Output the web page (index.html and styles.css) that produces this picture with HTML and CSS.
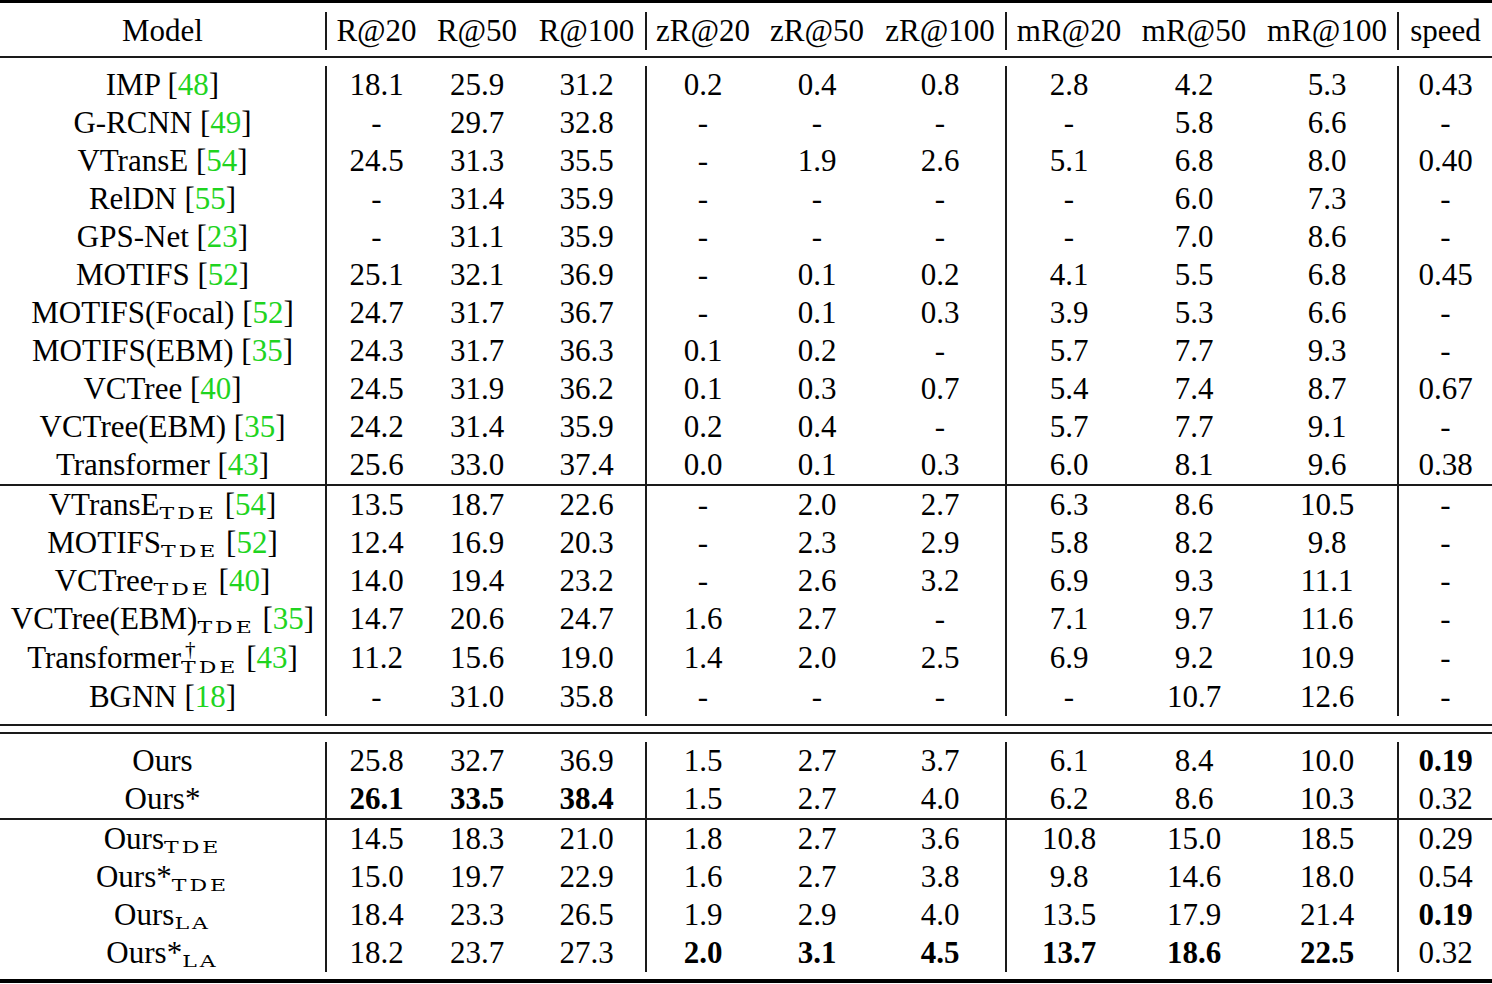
FILE: index.html
```html
<!doctype html>
<html lang="en">
  <head>
    <meta charset="UTF-8" />
    <meta name="viewport" content="width=device-width, initial-scale=1.0" />
    <title>Scene Graph Results</title>
    <link rel="stylesheet" href="styles.css">
  </head>
  <body>
    <div class="results">
      <div class="rule thick"></div>

      <div class="section head">
        <div class="row">
          <div class="c">Model</div>
          <div class="c vl">R@20</div><div class="c">R@50</div><div class="c">R@100</div>
          <div class="c vl">zR@20</div><div class="c">zR@50</div><div class="c">zR@100</div>
          <div class="c vl">mR@20</div><div class="c">mR@50</div><div class="c">mR@100</div>
          <div class="c vl">speed</div>
        </div>
      </div>

      <div class="rule"></div>

      <div class="section first">
        <div class="row">
          <div class="c">IMP [<span class="cite">48</span>]</div>
          <div class="c vl">18.1</div><div class="c">25.9</div><div class="c">31.2</div>
          <div class="c vl">0.2</div><div class="c">0.4</div><div class="c">0.8</div>
          <div class="c vl">2.8</div><div class="c">4.2</div><div class="c">5.3</div>
          <div class="c vl">0.43</div>
        </div>
        <div class="row">
          <div class="c">G-RCNN [<span class="cite">49</span>]</div>
          <div class="c vl">-</div><div class="c">29.7</div><div class="c">32.8</div>
          <div class="c vl">-</div><div class="c">-</div><div class="c">-</div>
          <div class="c vl">-</div><div class="c">5.8</div><div class="c">6.6</div>
          <div class="c vl">-</div>
        </div>
        <div class="row">
          <div class="c">VTransE [<span class="cite">54</span>]</div>
          <div class="c vl">24.5</div><div class="c">31.3</div><div class="c">35.5</div>
          <div class="c vl">-</div><div class="c">1.9</div><div class="c">2.6</div>
          <div class="c vl">5.1</div><div class="c">6.8</div><div class="c">8.0</div>
          <div class="c vl">0.40</div>
        </div>
        <div class="row">
          <div class="c">RelDN [<span class="cite">55</span>]</div>
          <div class="c vl">-</div><div class="c">31.4</div><div class="c">35.9</div>
          <div class="c vl">-</div><div class="c">-</div><div class="c">-</div>
          <div class="c vl">-</div><div class="c">6.0</div><div class="c">7.3</div>
          <div class="c vl">-</div>
        </div>
        <div class="row">
          <div class="c">GPS-Net [<span class="cite">23</span>]</div>
          <div class="c vl">-</div><div class="c">31.1</div><div class="c">35.9</div>
          <div class="c vl">-</div><div class="c">-</div><div class="c">-</div>
          <div class="c vl">-</div><div class="c">7.0</div><div class="c">8.6</div>
          <div class="c vl">-</div>
        </div>
        <div class="row">
          <div class="c">MOTIFS [<span class="cite">52</span>]</div>
          <div class="c vl">25.1</div><div class="c">32.1</div><div class="c">36.9</div>
          <div class="c vl">-</div><div class="c">0.1</div><div class="c">0.2</div>
          <div class="c vl">4.1</div><div class="c">5.5</div><div class="c">6.8</div>
          <div class="c vl">0.45</div>
        </div>
        <div class="row">
          <div class="c">MOTIFS(Focal) [<span class="cite">52</span>]</div>
          <div class="c vl">24.7</div><div class="c">31.7</div><div class="c">36.7</div>
          <div class="c vl">-</div><div class="c">0.1</div><div class="c">0.3</div>
          <div class="c vl">3.9</div><div class="c">5.3</div><div class="c">6.6</div>
          <div class="c vl">-</div>
        </div>
        <div class="row">
          <div class="c">MOTIFS(EBM) [<span class="cite">35</span>]</div>
          <div class="c vl">24.3</div><div class="c">31.7</div><div class="c">36.3</div>
          <div class="c vl">0.1</div><div class="c">0.2</div><div class="c">-</div>
          <div class="c vl">5.7</div><div class="c">7.7</div><div class="c">9.3</div>
          <div class="c vl">-</div>
        </div>
        <div class="row">
          <div class="c">VCTree [<span class="cite">40</span>]</div>
          <div class="c vl">24.5</div><div class="c">31.9</div><div class="c">36.2</div>
          <div class="c vl">0.1</div><div class="c">0.3</div><div class="c">0.7</div>
          <div class="c vl">5.4</div><div class="c">7.4</div><div class="c">8.7</div>
          <div class="c vl">0.67</div>
        </div>
        <div class="row">
          <div class="c">VCTree(EBM) [<span class="cite">35</span>]</div>
          <div class="c vl">24.2</div><div class="c">31.4</div><div class="c">35.9</div>
          <div class="c vl">0.2</div><div class="c">0.4</div><div class="c">-</div>
          <div class="c vl">5.7</div><div class="c">7.7</div><div class="c">9.1</div>
          <div class="c vl">-</div>
        </div>
        <div class="row">
          <div class="c">Transformer [<span class="cite">43</span>]</div>
          <div class="c vl">25.6</div><div class="c">33.0</div><div class="c">37.4</div>
          <div class="c vl">0.0</div><div class="c">0.1</div><div class="c">0.3</div>
          <div class="c vl">6.0</div><div class="c">8.1</div><div class="c">9.6</div>
          <div class="c vl">0.38</div>
        </div>
      </div>

      <div class="rule"></div>

      <div class="section second">
        <div class="row">
          <div class="c">VTransE<span class="sub">TDE</span> [<span class="cite">54</span>]</div>
          <div class="c vl">13.5</div><div class="c">18.7</div><div class="c">22.6</div>
          <div class="c vl">-</div><div class="c">2.0</div><div class="c">2.7</div>
          <div class="c vl">6.3</div><div class="c">8.6</div><div class="c">10.5</div>
          <div class="c vl">-</div>
        </div>
        <div class="row">
          <div class="c">MOTIFS<span class="sub">TDE</span> [<span class="cite">52</span>]</div>
          <div class="c vl">12.4</div><div class="c">16.9</div><div class="c">20.3</div>
          <div class="c vl">-</div><div class="c">2.3</div><div class="c">2.9</div>
          <div class="c vl">5.8</div><div class="c">8.2</div><div class="c">9.8</div>
          <div class="c vl">-</div>
        </div>
        <div class="row">
          <div class="c">VCTree<span class="sub">TDE</span> [<span class="cite">40</span>]</div>
          <div class="c vl">14.0</div><div class="c">19.4</div><div class="c">23.2</div>
          <div class="c vl">-</div><div class="c">2.6</div><div class="c">3.2</div>
          <div class="c vl">6.9</div><div class="c">9.3</div><div class="c">11.1</div>
          <div class="c vl">-</div>
        </div>
        <div class="row">
          <div class="c">VCTree(EBM)<span class="sub">TDE</span> [<span class="cite">35</span>]</div>
          <div class="c vl">14.7</div><div class="c">20.6</div><div class="c">24.7</div>
          <div class="c vl">1.6</div><div class="c">2.7</div><div class="c">-</div>
          <div class="c vl">7.1</div><div class="c">9.7</div><div class="c">11.6</div>
          <div class="c vl">-</div>
        </div>
        <div class="row tall">
          <div class="c">Transformer<span class="supsub"><span class="sup">&dagger;</span><span class="sub">TDE</span></span> [<span class="cite">43</span>]</div>
          <div class="c vl">11.2</div><div class="c">15.6</div><div class="c">19.0</div>
          <div class="c vl">1.4</div><div class="c">2.0</div><div class="c">2.5</div>
          <div class="c vl">6.9</div><div class="c">9.2</div><div class="c">10.9</div>
          <div class="c vl">-</div>
        </div>
        <div class="row">
          <div class="c">BGNN [<span class="cite">18</span>]</div>
          <div class="c vl">-</div><div class="c">31.0</div><div class="c">35.8</div>
          <div class="c vl">-</div><div class="c">-</div><div class="c">-</div>
          <div class="c vl">-</div><div class="c">10.7</div><div class="c">12.6</div>
          <div class="c vl">-</div>
        </div>
      </div>

      <div class="rule"></div>
      <div class="rule-gap"></div>
      <div class="rule"></div>

      <div class="section third">
        <div class="row">
          <div class="c">Ours</div>
          <div class="c vl">25.8</div><div class="c">32.7</div><div class="c">36.9</div>
          <div class="c vl">1.5</div><div class="c">2.7</div><div class="c">3.7</div>
          <div class="c vl">6.1</div><div class="c">8.4</div><div class="c">10.0</div>
          <div class="c vl best">0.19</div>
        </div>
        <div class="row">
          <div class="c">Ours*</div>
          <div class="c vl best">26.1</div><div class="c best">33.5</div><div class="c best">38.4</div>
          <div class="c vl">1.5</div><div class="c">2.7</div><div class="c">4.0</div>
          <div class="c vl">6.2</div><div class="c">8.6</div><div class="c">10.3</div>
          <div class="c vl">0.32</div>
        </div>
      </div>

      <div class="rule"></div>

      <div class="section last">
        <div class="row">
          <div class="c">Ours<span class="sub">TDE</span></div>
          <div class="c vl">14.5</div><div class="c">18.3</div><div class="c">21.0</div>
          <div class="c vl">1.8</div><div class="c">2.7</div><div class="c">3.6</div>
          <div class="c vl">10.8</div><div class="c">15.0</div><div class="c">18.5</div>
          <div class="c vl">0.29</div>
        </div>
        <div class="row">
          <div class="c">Ours*<span class="sub">TDE</span></div>
          <div class="c vl">15.0</div><div class="c">19.7</div><div class="c">22.9</div>
          <div class="c vl">1.6</div><div class="c">2.7</div><div class="c">3.8</div>
          <div class="c vl">9.8</div><div class="c">14.6</div><div class="c">18.0</div>
          <div class="c vl">0.54</div>
        </div>
        <div class="row">
          <div class="c">Ours<span class="sub">LA</span></div>
          <div class="c vl">18.4</div><div class="c">23.3</div><div class="c">26.5</div>
          <div class="c vl">1.9</div><div class="c">2.9</div><div class="c">4.0</div>
          <div class="c vl">13.5</div><div class="c">17.9</div><div class="c">21.4</div>
          <div class="c vl best">0.19</div>
        </div>
        <div class="row">
          <div class="c">Ours*<span class="sub">LA</span></div>
          <div class="c vl">18.2</div><div class="c">23.7</div><div class="c">27.3</div>
          <div class="c vl best">2.0</div><div class="c best">3.1</div><div class="c best">4.5</div>
          <div class="c vl best">13.7</div><div class="c best">18.6</div><div class="c best">22.5</div>
          <div class="c vl">0.32</div>
        </div>
      </div>

      <div class="rule thick bottom"></div>
    </div>
  </body>
</html>
```

FILE: styles.css
```css
body {
  margin: 0;
  background-color: #fff;
  color: #000;
  font-family: "Liberation Serif", "Times New Roman", serif;
  font-size: 31px;
}
.results {
  width: 1492px;
}
.rule {
  height: 2px;
  background-color: #1a1a1a;
}
.rule.thick {
  height: 3px;
  background-color: #000;
}
.rule.bottom {
  height: 4px;
}
.rule-gap {
  height: 6px;
}
.section.head {
  padding: 9px 0 6px;
}
.section.first {
  padding-top: 8px;
}
.section.second {
  padding-bottom: 8px;
}
.section.third {
  padding-top: 8px;
}
.section.last {
  padding-bottom: 7px;
}
.row {
  display: grid;
  grid-template-columns: 325px 101px 102px 117px 114px 116px 130px 126px 126px 140px 95px;
  height: 38px;
}
.row.tall {
  height: 40px;
}
.c {
  box-sizing: border-box;
  text-align: center;
  line-height: 38px;
  white-space: nowrap;
}
.row.tall .c {
  line-height: 40px;
}
.vl {
  border-left: 2px solid #1a1a1a;
}
.best {
  font-weight: bold;
}
.cite {
  color: #1fd41f;
}

/* wide, short caps like the CM subscripts */
.sub {
  display: inline-block;
  font-family: "DejaVu Serif", serif;
  font-size: 22px;
  line-height: 22px;
  letter-spacing: 3px;
  transform: scaleY(0.72);
  transform-origin: 50% 18.6px;
  vertical-align: -4px;
}
.supsub {
  display: inline-block;
  font-size: 21px;
  line-height: 12px;
  text-align: left;
  vertical-align: -5px;
}
.supsub .sup {
  display: block;
  padding-left: 4px;
}
.supsub .sub {
  vertical-align: 0;
}
```
